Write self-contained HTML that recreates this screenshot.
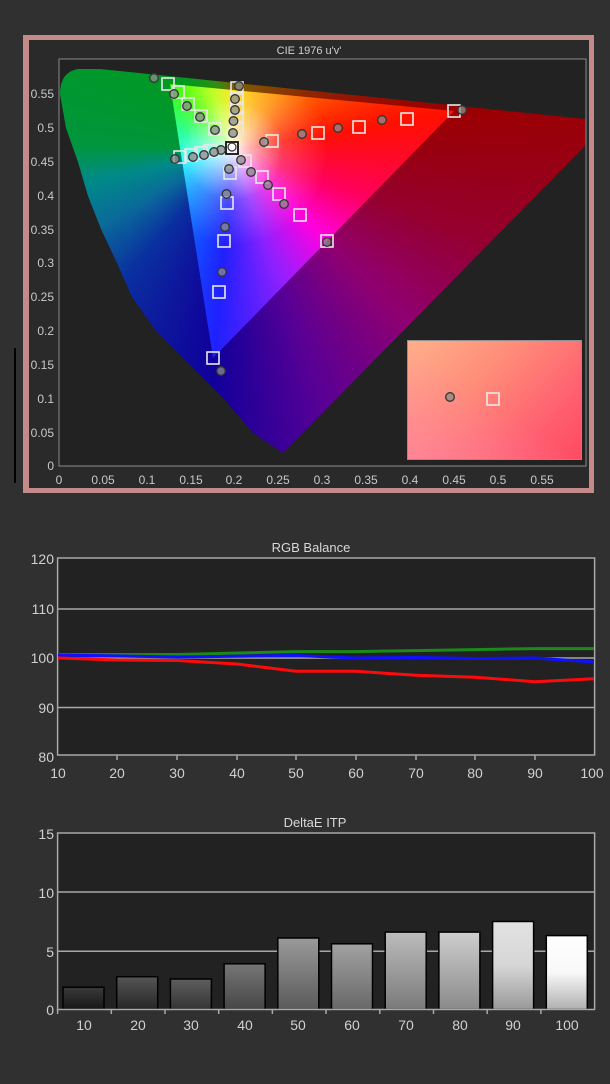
<!DOCTYPE html>
<html><head><meta charset="utf-8"><style>
html,body{margin:0;padding:0;background:#303030;}
#w{position:relative;width:610px;height:1084px;overflow:hidden;background:#303030;font-family:"Liberation Sans",sans-serif;}
.abs{position:absolute;left:0;top:0;width:610px;height:500px;}
#outer{clip-path:path('M283,453 L253,433 L224,399 L190,365 L156,331 L132,297 L117,263 L101,229 L88,196 L78,162 L66,128 L60,94 Q60,72 78,69 L100,69 L586,119 L586,145 Z');
background:conic-gradient(from 0deg at 233px 150px,#7a6000 0deg,#8a3a00 40deg,#9a0000 80deg,#950030 110deg,#900070 134deg,#5a0095 160deg,#10009a 185deg,#0a30a0 220deg,#0a6a9a 240deg,#008a88 258deg,#00963c 272deg,#00982a 300deg,#009a20 325deg,#2a9010 345deg,#7a6000 360deg);}
#tri{clip-path:polygon(170px 84px,454px 111px,213px 358px);
background:radial-gradient(circle at 233px 150px,rgba(255,255,255,1) 0px,rgba(255,255,255,.7) 16px,rgba(255,255,255,.2) 50px,rgba(255,255,255,0) 95px),
conic-gradient(from 0deg at 233px 150px,#ffe000 0deg,#ff8a00 40deg,#ff1000 80deg,#ff0060 110deg,#ff00e0 134deg,#9020ff 160deg,#2020ff 185deg,#0090ff 225deg,#00ffff 261deg,#00ff80 290deg,#30ff00 316deg,#b0ff00 340deg,#ffe000 360deg);}
#inset{position:absolute;left:407px;top:340px;width:173px;height:118px;border:1px solid #909090;
background:linear-gradient(135deg,#ffb08a 0%,#ff8a78 40%,#ff6070 75%,#ff4a60 100%);}
#inset2{position:absolute;left:408px;top:341px;width:173px;height:118px;background:linear-gradient(to top right,rgba(255,130,170,.6),rgba(255,130,170,0) 50%);}
</style></head><body><div id="w">
<svg class="abs" style="height:1084px" width="610" height="1084">
<rect x="23" y="35" width="571" height="458" fill="#c48a8a"/>
<rect x="29" y="40" width="560" height="448" fill="#2a2a2a"/>
<rect x="59" y="59" width="527" height="407" fill="#222"/>
<rect x="14" y="348" width="2" height="135" fill="#000"/>
<rect x="57.6" y="558" width="537" height="197" fill="#222"/>
<rect x="57.6" y="833" width="537" height="176.5" fill="#222"/>
</svg>
<div class="abs" id="outer"></div>
<div class="abs" id="tri"></div>
<div id="inset"></div><div id="inset2"></div>
<svg class="abs" style="height:1084px" width="610" height="1084" font-family="Liberation Sans, sans-serif">
<text x="309" y="54" fill="#d0d0d0" font-size="11" text-anchor="middle">CIE 1976 u'v'</text>
<rect x="59" y="59" width="527" height="407" fill="none" stroke="#8a8a8a" stroke-width="1"/>
<g fill="#c8c8c8" font-size="12" text-anchor="end">
<text x="54" y="98">0.55</text><text x="54" y="132">0.5</text><text x="54" y="166">0.45</text><text x="54" y="200">0.4</text><text x="54" y="234">0.35</text><text x="54" y="267">0.3</text><text x="54" y="301">0.25</text><text x="54" y="335">0.2</text><text x="54" y="369">0.15</text><text x="54" y="403">0.1</text><text x="54" y="437">0.05</text><text x="54" y="470">0</text>
</g>
<g fill="#c8c8c8" font-size="12" text-anchor="middle">
<text x="59" y="484">0</text><text x="103" y="484">0.05</text><text x="147" y="484">0.1</text><text x="191" y="484">0.15</text><text x="234" y="484">0.2</text><text x="278" y="484">0.25</text><text x="322" y="484">0.3</text><text x="366" y="484">0.35</text><text x="410" y="484">0.4</text><text x="454" y="484">0.45</text><text x="498" y="484">0.5</text><text x="542" y="484">0.55</text>
</g>
<g fill="none" stroke="#e8e8e8" stroke-width="1.6">
<rect x="162" y="78" width="12" height="12"/><rect x="172" y="86" width="12" height="12"/><rect x="182" y="98" width="12" height="12"/><rect x="195" y="110" width="12" height="12"/><rect x="209" y="123" width="12" height="12"/>
<rect x="231" y="82" width="12" height="12"/><rect x="231" y="92" width="12" height="12"/><rect x="231" y="102" width="12" height="12"/><rect x="231" y="112" width="12" height="12"/><rect x="231" y="122" width="12" height="12"/>
<rect x="266" y="135" width="12" height="12"/><rect x="312" y="127" width="12" height="12"/><rect x="353" y="121" width="12" height="12"/><rect x="401" y="113" width="12" height="12"/><rect x="448" y="105" width="12" height="12"/>
<rect x="204" y="145" width="12" height="12"/><rect x="195" y="147" width="12" height="12"/><rect x="185" y="149" width="12" height="12"/><rect x="174" y="151" width="12" height="12"/>
<rect x="239" y="155" width="12" height="12"/><rect x="256" y="171" width="12" height="12"/><rect x="273" y="188" width="12" height="12"/><rect x="294" y="209" width="12" height="12"/><rect x="321" y="235" width="12" height="12"/>
<rect x="224" y="167" width="12" height="12"/><rect x="221" y="197" width="12" height="12"/><rect x="218" y="235" width="12" height="12"/><rect x="213" y="286" width="12" height="12"/><rect x="207" y="352" width="12" height="12"/>
<rect x="487" y="393" width="12" height="12"/>
</g>
<rect x="226" y="142" width="12" height="12" fill="none" stroke="#111" stroke-width="1.8"/>
<g fill="rgba(140,140,140,.75)" stroke="#333" stroke-width="1.3">
<circle cx="154" cy="78" r="4.3"/><circle cx="174" cy="94" r="4.3"/><circle cx="187" cy="106" r="4.3"/><circle cx="200" cy="117" r="4.3"/><circle cx="215" cy="130" r="4.3"/>
<circle cx="239" cy="86" r="4.3"/><circle cx="235" cy="99" r="4.3"/><circle cx="235" cy="110" r="4.3"/><circle cx="233.5" cy="121" r="4.3"/><circle cx="233" cy="133" r="4.3"/>
<circle cx="264" cy="142" r="4.3"/><circle cx="302" cy="134" r="4.3"/><circle cx="338" cy="128" r="4.3"/><circle cx="382" cy="120" r="4.3"/><circle cx="462" cy="110" r="4.3"/>
<circle cx="221" cy="150" r="4.3"/><circle cx="214" cy="152" r="4.3"/><circle cx="204" cy="155" r="4.3"/><circle cx="193" cy="157" r="4.3"/><circle cx="175" cy="159" r="4.3"/>
<circle cx="241" cy="160" r="4.3"/><circle cx="251" cy="172" r="4.3"/><circle cx="268" cy="185" r="4.3"/><circle cx="284" cy="204" r="4.3"/><circle cx="327" cy="242" r="4.3"/>
<circle cx="229" cy="169" r="4.3"/><circle cx="226.5" cy="194" r="4.3"/><circle cx="225" cy="227" r="4.3"/><circle cx="222" cy="272" r="4.3"/><circle cx="221" cy="371" r="4.3"/>
<circle cx="450" cy="397" r="4.3"/>
</g>
<circle cx="232" cy="147" r="4" fill="#fff" stroke="#333" stroke-width="1.2"/>

<text x="311" y="552" fill="#d8d8d8" font-size="13" text-anchor="middle">RGB Balance</text>
<g stroke="#a8a8a8" stroke-width="1.5">
<line x1="57.6" y1="609" x2="594.6" y2="609"/><line x1="57.6" y1="658" x2="594.6" y2="658"/><line x1="57.6" y1="707.5" x2="594.6" y2="707.5"/>
</g>
<rect x="57.6" y="558" width="537" height="197" fill="none" stroke="#a8a8a8" stroke-width="1.5"/>
<g stroke="#a8a8a8" stroke-width="1.5">
<line x1="117" y1="755" x2="117" y2="760"/><line x1="177" y1="755" x2="177" y2="760"/><line x1="237" y1="755" x2="237" y2="760"/><line x1="296" y1="755" x2="296" y2="760"/><line x1="356" y1="755" x2="356" y2="760"/><line x1="416" y1="755" x2="416" y2="760"/><line x1="475" y1="755" x2="475" y2="760"/><line x1="535" y1="755" x2="535" y2="760"/>
</g>
<g fill="#d0d0d0" font-size="14" text-anchor="end">
<text x="54" y="564">120</text><text x="54" y="614">110</text><text x="54" y="663">100</text><text x="54" y="713">90</text><text x="54" y="762">80</text>
</g>
<g fill="#d0d0d0" font-size="14" text-anchor="middle">
<text x="58" y="778">10</text><text x="117" y="778">20</text><text x="177" y="778">30</text><text x="237" y="778">40</text><text x="296" y="778">50</text><text x="356" y="778">60</text><text x="416" y="778">70</text><text x="475" y="778">80</text><text x="535" y="778">90</text><text x="592" y="778">100</text>
</g>
<polyline fill="none" stroke="#1a8a1a" stroke-width="3" points="58,654.5 177,654.5 296,651.6 356,651.6 416,650.6 475,649.6 535,648.6 594,648.6"/>
<polyline fill="none" stroke="#1010ff" stroke-width="3" points="58,655 177,657 296,655.5 356,658 416,657.5 475,658.5 535,658 594,662"/>
<polyline fill="none" stroke="#ff0a0a" stroke-width="3" points="58,658 117,660 177,660.5 237,664 296,671.3 356,671.3 416,675.3 475,677.2 535,681.7 594,678.7"/>

<text x="315" y="827" fill="#d8d8d8" font-size="13" text-anchor="middle">DeltaE ITP</text>
<defs>
<linearGradient id="g1" x1="0" y1="0" x2="0" y2="1"><stop offset="0" stop-color="#3a3a3a"/><stop offset="1" stop-color="#161616"/></linearGradient>
<linearGradient id="g2" x1="0" y1="0" x2="0" y2="1"><stop offset="0" stop-color="#555"/><stop offset="1" stop-color="#262626"/></linearGradient>
<linearGradient id="g3" x1="0" y1="0" x2="0" y2="1"><stop offset="0" stop-color="#5e5e5e"/><stop offset="1" stop-color="#343434"/></linearGradient>
<linearGradient id="g4" x1="0" y1="0" x2="0" y2="1"><stop offset="0" stop-color="#767676"/><stop offset="1" stop-color="#464646"/></linearGradient>
<linearGradient id="g5" x1="0" y1="0" x2="0" y2="1"><stop offset="0" stop-color="#9a9a9a"/><stop offset="1" stop-color="#5a5a5a"/></linearGradient>
<linearGradient id="g6" x1="0" y1="0" x2="0" y2="1"><stop offset="0" stop-color="#a2a2a2"/><stop offset="1" stop-color="#686868"/></linearGradient>
<linearGradient id="g7" x1="0" y1="0" x2="0" y2="1"><stop offset="0" stop-color="#bcbcbc"/><stop offset="1" stop-color="#7a7a7a"/></linearGradient>
<linearGradient id="g8" x1="0" y1="0" x2="0" y2="1"><stop offset="0" stop-color="#cecece"/><stop offset="1" stop-color="#8a8a8a"/></linearGradient>
<linearGradient id="g9" x1="0" y1="0" x2="0" y2="1"><stop offset="0" stop-color="#e2e2e2"/><stop offset=".5" stop-color="#d6d6d6"/><stop offset="1" stop-color="#999"/></linearGradient>
<linearGradient id="g10" x1="0" y1="0" x2="0" y2="1"><stop offset="0" stop-color="#fff"/><stop offset=".5" stop-color="#f8f8f8"/><stop offset="1" stop-color="#b0b0b0"/></linearGradient>
</defs>
<g stroke="#a8a8a8" stroke-width="1.5">
<line x1="57.6" y1="892" x2="594.6" y2="892"/><line x1="57.6" y1="951.3" x2="594.6" y2="951.3"/>
</g>
<g stroke="#000" stroke-width="1.5">
<rect x="63" y="987.2" width="41" height="22.3" fill="url(#g1)"/>
<rect x="116.7" y="976.7" width="41" height="32.8" fill="url(#g2)"/>
<rect x="170.4" y="979" width="41" height="30.5" fill="url(#g3)"/>
<rect x="224.1" y="963.8" width="41" height="45.7" fill="url(#g4)"/>
<rect x="277.8" y="938" width="41" height="71.5" fill="url(#g5)"/>
<rect x="331.5" y="943.8" width="41" height="65.7" fill="url(#g6)"/>
<rect x="385.2" y="932.1" width="41" height="77.4" fill="url(#g7)"/>
<rect x="438.9" y="932.1" width="41" height="77.4" fill="url(#g8)"/>
<rect x="492.6" y="921.5" width="41" height="88" fill="url(#g9)"/>
<rect x="546.3" y="935.6" width="41" height="73.9" fill="url(#g10)"/>
</g>
<rect x="57.6" y="833" width="537" height="176.5" fill="none" stroke="#a8a8a8" stroke-width="1.5"/>
<g stroke="#a8a8a8" stroke-width="1.5">
<line x1="111.3" y1="1009" x2="111.3" y2="1014"/><line x1="165" y1="1009" x2="165" y2="1014"/><line x1="218.7" y1="1009" x2="218.7" y2="1014"/><line x1="272.4" y1="1009" x2="272.4" y2="1014"/><line x1="326" y1="1009" x2="326" y2="1014"/><line x1="379.8" y1="1009" x2="379.8" y2="1014"/><line x1="433.5" y1="1009" x2="433.5" y2="1014"/><line x1="487.2" y1="1009" x2="487.2" y2="1014"/><line x1="540.9" y1="1009" x2="540.9" y2="1014"/><line x1="57.6" y1="1009" x2="57.6" y2="1014"/>
</g>
<g fill="#d0d0d0" font-size="14" text-anchor="end">
<text x="54" y="839">15</text><text x="54" y="898">10</text><text x="54" y="957">5</text><text x="54" y="1015">0</text>
</g>
<g fill="#d0d0d0" font-size="14" text-anchor="middle">
<text x="84" y="1030">10</text><text x="138" y="1030">20</text><text x="191" y="1030">30</text><text x="245" y="1030">40</text><text x="298" y="1030">50</text><text x="352" y="1030">60</text><text x="406" y="1030">70</text><text x="460" y="1030">80</text><text x="513" y="1030">90</text><text x="567" y="1030">100</text>
</g>
</svg>
</div></body></html>
